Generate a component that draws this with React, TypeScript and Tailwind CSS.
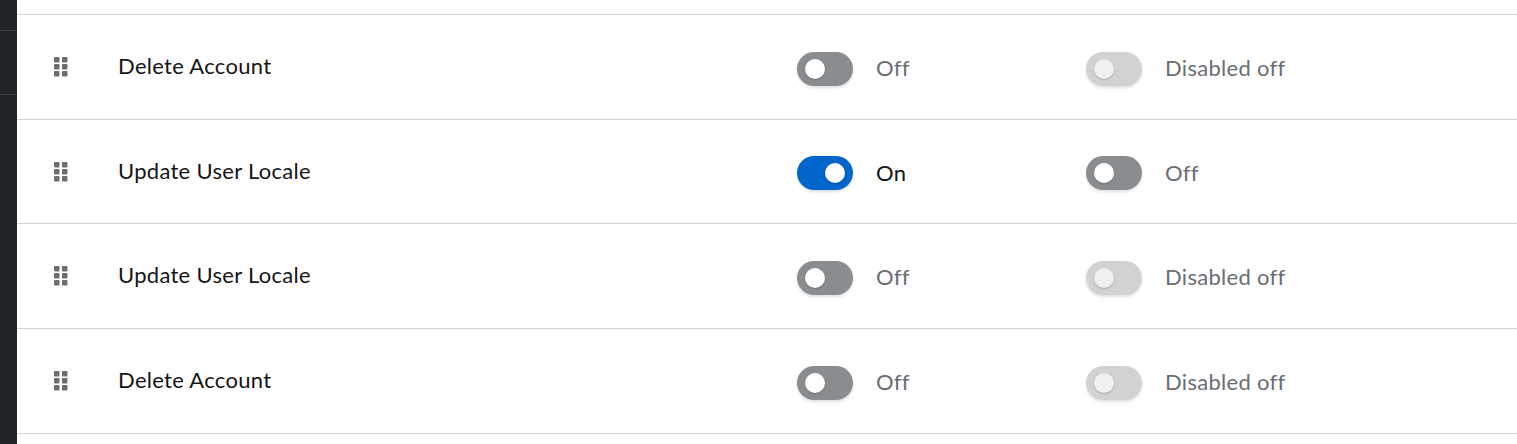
const rows = [
  { name: 'Delete Account', a: 'off', b: 'disabled', h: 'h-[105px]' },
  { name: 'Update User Locale', a: 'on', b: 'off', h: 'h-[104px]' },
  { name: 'Update User Locale', a: 'off', b: 'disabled', h: 'h-[105px]' },
  { name: 'Delete Account', a: 'off', b: 'disabled', h: 'h-[105px]' },
]

function DragIcon() {
  return (
    <svg width="14" height="20" viewBox="0 0 14 20" className="text-[#6a6e73]">
      {[0, 7, 14].map(y => (
        <g key={y}>
          <rect x="0" y={y} width="5.5" height="5.5" rx="1" fill="currentColor" />
          <rect x="8" y={y} width="5.5" height="5.5" rx="1" fill="currentColor" />
        </g>
      ))}
    </svg>
  )
}

function Switch({ state }: { state: string }) {
  const on = state === 'on'
  const disabled = state === 'disabled'
  const track = on ? 'bg-[#0066cc]' : disabled ? 'bg-[#d2d2d2]' : 'bg-[#8a8d90]'
  const knob = disabled ? 'bg-[#f0f0f0]' : 'bg-white'
  const label = on ? 'On' : disabled ? 'Disabled off' : 'Off'
  return (
    <div className="flex items-center gap-[23px] mt-[3px]">
      <div className={`relative w-[56px] h-[34px] rounded-full ${track} shadow-[0_2px_3px_rgba(0,0,0,0.12)]`}>
        <span className={`absolute top-[7px] w-[20px] h-[20px] rounded-full ${knob} shadow-[0_1px_2px_rgba(0,0,0,0.2)] ${on ? 'right-[8px]' : 'left-[8px]'}`} />
      </div>
      <span className={`text-[22px] tracking-[0.3px] -mt-[2px] ${on ? 'text-[#151515]' : 'text-[#6a6e73]'}`}>{label}</span>
    </div>
  )
}

export default function App() {
  return (
    <div className="flex h-[444px] overflow-hidden" style={{ fontFamily: 'Lato, "Open Sans", sans-serif' }}>
      <div className="w-[17px] shrink-0 bg-[#212427] flex flex-col">
        <div className="h-[30px]" />
        <div className="h-px bg-[#3c3f42]" />
        <div className="h-[63px]" />
        <div className="h-px bg-[#3c3f42]" />
      </div>

      <main className="flex-1 bg-white pt-[14px]">
        <div className="border-t border-[#d2d2d2]">
          {rows.map((r, i) => (
            <div key={i} className={`grid grid-cols-[101px_679px_289px_1fr] items-center ${r.h} border-b border-[#d2d2d2]`}>
              <div className="pl-[37px] flex items-center">
                <DragIcon />
              </div>
              <div className="text-[22px] tracking-[0.3px] text-[#151515] -mt-[3px]">{r.name}</div>
              <Switch state={r.a} />
              <Switch state={r.b} />
            </div>
          ))}
        </div>
      </main>
    </div>
  )
}
